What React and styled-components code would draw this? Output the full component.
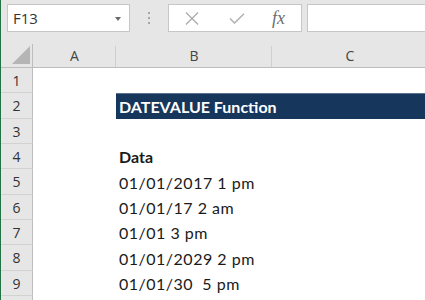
import React from "react";
import styled, { createGlobalStyle } from "styled-components";

const Global = createGlobalStyle`
  html, body { margin: 0; padding: 0; background: #fff; overflow: hidden; }
  * { box-sizing: border-box; }
`;

const Frame = styled.div`
  width: 425px;
  height: 300px;
  overflow: hidden;
  border-left: 1px solid #217346;
  background: #fff;
  display: flex;
  flex-direction: column;
`;

const Toolbar = styled.div`
  height: 44px;
  flex: none;
  background: #e6e6e6;
  display: flex;
  align-items: flex-start;
  padding: 4px 0 0 6px;
`;

const NameBox = styled.div`
  width: 123px;
  height: 28px;
  background: #fff;
  border: 1px solid #c6c6c6;
  display: flex;
  align-items: center;
  justify-content: space-between;
  padding: 0 8px 0 5px;
  font-family: "Open Sans", "Noto Sans", sans-serif;
  font-size: 15px;
  color: #333;
`;

const Arrow = styled.span`
  width: 0;
  height: 0;
  border-left: 3.5px solid transparent;
  border-right: 3.5px solid transparent;
  border-top: 4px solid #6a6a6a;
  margin-top: 1px;
`;

const Grip = styled.div`
  width: 38px;
  height: 28px;
  display: flex;
  flex-direction: column;
  align-items: center;
  justify-content: center;
  gap: 3px;
`;

const Dot = styled.span`
  width: 2px;
  height: 2px;
  background: #a6a6a6;
`;

const ActionBox = styled.div`
  width: 134px;
  height: 28px;
  background: #fff;
  border: 1px solid #c6c6c6;
  display: flex;
  align-items: center;
  padding-left: 16px;
`;

const IconSlot = styled.span`
  width: ${(p) => p.$w}px;
  display: flex;
  align-items: center;
  justify-content: flex-start;
`;

const Fx = styled.span`
  font-family: "Liberation Serif", "DejaVu Serif", serif;
  font-style: italic;
  font-size: 18px;
  color: #6e6e6e;
  line-height: 1;
  margin-top: -1px;
`;

const Input = styled.div`
  flex: 1;
  height: 28px;
  margin-left: 5px;
  margin-right: -3px;
  background: #fff;
  border: 1px solid #c6c6c6;
`;

const Sheet = styled.div`
  flex: none;
  display: grid;
  grid-template-columns: 32px 83px 156px 156px;
  grid-template-rows: 24px repeat(10, 25.33px);
`;

const Corner = styled.div`
  background: #e6e6e6;
  border-right: 1px solid #bdbdbd;
  border-bottom: 1px solid #bdbdbd;
  display: flex;
  align-items: flex-end;
  justify-content: flex-end;
  padding: 0 2px 3px 0;
`;

const Triangle = styled.span`
  width: 0;
  height: 0;
  border-left: 18px solid transparent;
  border-bottom: 18px solid #b5b5b5;
`;

const ColHead = styled.div`
  background: #e6e6e6;
  border-bottom: 1px solid #bdbdbd;
  display: flex;
  align-items: flex-end;
  justify-content: center;
  position: relative;
  font-family: "Open Sans", "Noto Sans", sans-serif;
  font-size: 14px;
  line-height: 20px;
  color: #444;
  padding-bottom: 1px;
  &::after {
    content: "";
    position: absolute;
    right: 0;
    top: 2px;
    bottom: 0;
    width: 1px;
    background: #cfcfcf;
  }
`;

const RowHead = styled.div`
  background: #e6e6e6;
  border-right: 1px solid #bdbdbd;
  border-bottom: 1px solid #d2d2d2;
  display: flex;
  align-items: center;
  justify-content: center;
  font-family: "Open Sans", "Noto Sans", sans-serif;
  font-size: 14px;
  color: #333;
  padding-top: 1px;
`;

const Cell = styled.div`
  grid-column: ${(p) => p.$span || "auto"};
  background: ${(p) => (p.$title ? "#16365c" : "#fff")};
  border-top: ${(p) => (p.$title ? "1px solid #5b7190" : "none")};
  color: ${(p) => (p.$title ? "#fff" : "#1a1a1a")};
  font-family: Lato, "Open Sans", sans-serif;
  font-size: 16px;
  letter-spacing: ${(p) => (p.$title || p.$bold ? "0" : "0.5px")};
  font-weight: ${(p) => (p.$bold ? 700 : 400)};
  line-height: 20px;
  display: flex;
  align-items: flex-end;
  padding: 0 0 2px 3px;
  white-space: pre;
  overflow: hidden;
`;

const rows = [
  null,
  { text: "DATEVALUE Function", title: true },
  null,
  { text: "Data", bold: true },
  { text: "01/01/2017 1 pm" },
  { text: "01/01/17 2 am" },
  { text: "01/01 3 pm" },
  { text: "01/01/2029 2 pm" },
  { text: "01/01/30  5 pm" },
  null,
];

export default function App() {
  return (
    <>
      <Global />
      <Frame>
        <Toolbar>
          <NameBox>
            F13
            <Arrow />
          </NameBox>
          <Grip>
            <Dot />
            <Dot />
            <Dot />
          </Grip>
          <ActionBox>
            <IconSlot $w={44}>
              <svg width="14" height="13" viewBox="0 0 14 13">
                <path d="M1 0.5 L13 12.5 M13 0.5 L1 12.5" stroke="#ababab" strokeWidth="1.3" fill="none" />
              </svg>
            </IconSlot>
            <IconSlot $w={43}>
              <svg width="16" height="11" viewBox="0 0 16 11">
                <path d="M1 5.5 L5.5 10 L15 0.8" stroke="#b3b3b3" strokeWidth="1.6" fill="none" />
              </svg>
            </IconSlot>
            <IconSlot $w={20}>
              <Fx>fx</Fx>
            </IconSlot>
          </ActionBox>
          <Input />
        </Toolbar>
        <Sheet>
          <Corner>
            <Triangle />
          </Corner>
          <ColHead>A</ColHead>
          <ColHead>B</ColHead>
          <ColHead>C</ColHead>
          {rows.map((r, i) => (
            <React.Fragment key={i}>
              <RowHead>{i < 9 ? i + 1 : ""}</RowHead>
              <Cell />
              {r && r.title ? (
                <Cell $span="span 2" $title $bold>
                  {r.text}
                </Cell>
              ) : (
                <>
                  <Cell $bold={r && r.bold}>{r ? r.text : ""}</Cell>
                  <Cell />
                </>
              )}
            </React.Fragment>
          ))}
        </Sheet>
      </Frame>
    </>
  );
}
